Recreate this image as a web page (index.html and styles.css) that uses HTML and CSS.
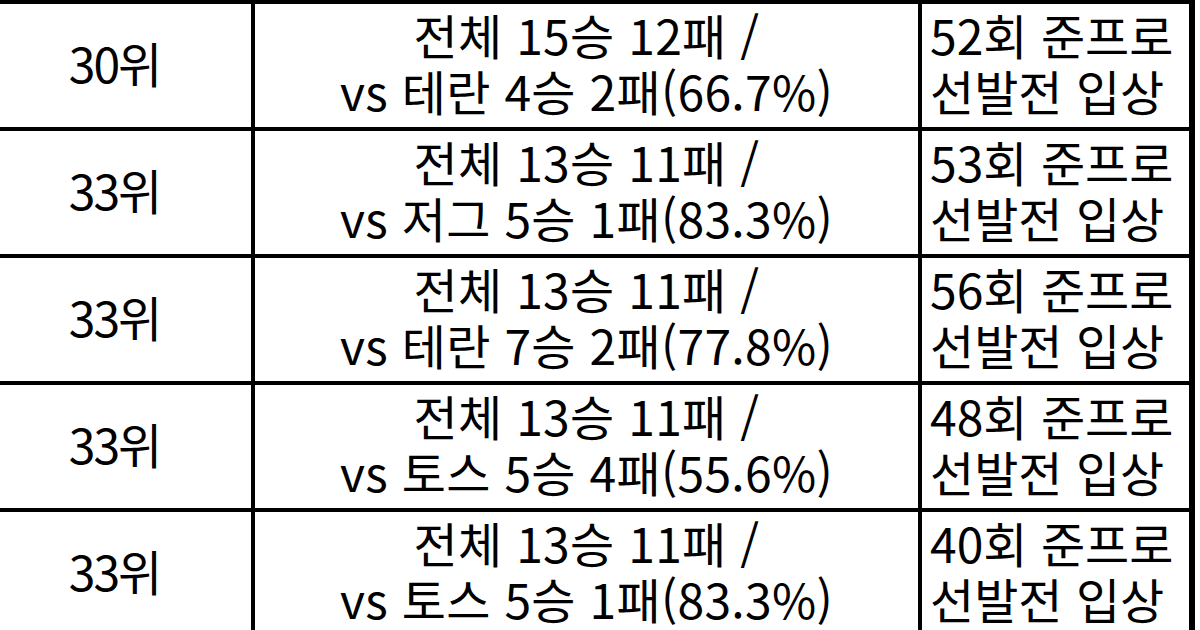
FILE: index.html
```html
<!DOCTYPE html>
<html lang="ko">
<head>
<meta charset="utf-8">
<link rel="stylesheet" href="styles.css">
</head>
<body>
<div class="table">
  <div class="cell rank"><span class="line">30위</span></div>
  <div class="cell record"><span class="line">전체 15승 12패 /</span><span class="line">vs 테란 4승 2패(66.7%)</span></div>
  <div class="cell note"><span class="line">52회 준프로</span><span class="line">선발전 입상</span></div>

  <div class="cell rank"><span class="line">33위</span></div>
  <div class="cell record"><span class="line">전체 13승 11패 /</span><span class="line">vs 저그 5승 1패(83.3%)</span></div>
  <div class="cell note"><span class="line">53회 준프로</span><span class="line">선발전 입상</span></div>

  <div class="cell rank"><span class="line">33위</span></div>
  <div class="cell record"><span class="line">전체 13승 11패 /</span><span class="line">vs 테란 7승 2패(77.8%)</span></div>
  <div class="cell note"><span class="line">56회 준프로</span><span class="line">선발전 입상</span></div>

  <div class="cell rank"><span class="line">33위</span></div>
  <div class="cell record"><span class="line">전체 13승 11패 /</span><span class="line">vs 토스 5승 4패(55.6%)</span></div>
  <div class="cell note"><span class="line">48회 준프로</span><span class="line">선발전 입상</span></div>

  <div class="cell rank"><span class="line">33위</span></div>
  <div class="cell record"><span class="line">전체 13승 11패 /</span><span class="line">vs 토스 5승 1패(83.3%)</span></div>
  <div class="cell note"><span class="line">40회 준프로</span><span class="line">선발전 입상</span></div>
</div>
</body>
</html>
```

FILE: styles.css
```css
html, body {
  margin: 0;
  padding: 0;
  background: #fff;
  overflow: hidden;
}

.table {
  width: 1189px;
  padding: 4px 6px 0 0;
  display: grid;
  grid-template-columns: 251px 663px 267px;
  grid-auto-rows: 123px;
  gap: 4px;
  background: #000;
  font-family: "Noto Sans CJK KR", "Noto Sans", sans-serif;
  font-size: 48px;
  line-height: 56px;
  color: #000;
}

.cell {
  background: #fff;
  display: flex;
  flex-direction: column;
  justify-content: center;
  white-space: nowrap;
  padding-bottom: 8px;
}

.line {
  display: block;
  height: 52px;
  line-height: 52px;
  margin: 2px 0;
}

.rank {
  align-items: center;
  padding-right: 22px;
  letter-spacing: -2px;
}

.record {
  text-align: center;
  align-items: center;
  letter-spacing: 0.3px;
}

.note {
  align-items: flex-start;
  padding-left: 8px;
}
```
